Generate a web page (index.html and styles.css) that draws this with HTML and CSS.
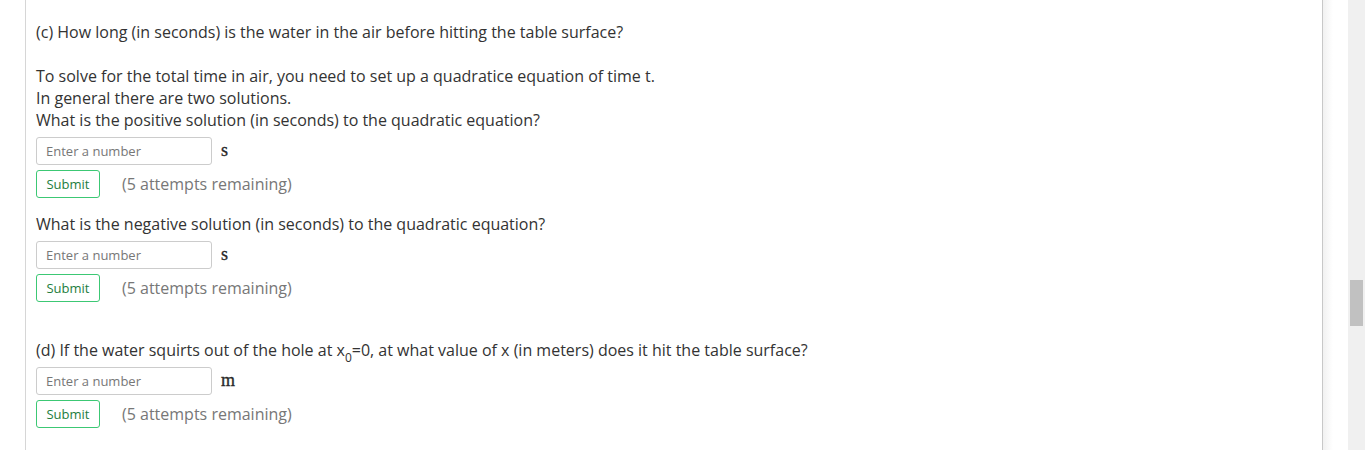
FILE: index.html
```html
<!DOCTYPE html>
<html>
<head>
<meta charset="utf-8">
<link rel="stylesheet" href="styles.css">
</head>
<body>
<div class="page">
  <div class="gutter"></div>
  <main class="panel">
    <p class="q">(c) How long (in seconds) is the water in the air before hitting the table surface?</p>
    <p class="q q-intro">To solve for the total time in air, you need to set up a quadratice equation of time t.<br>In general there are two solutions.<br>What is the positive solution (in seconds) to the quadratic equation?</p>
    <div class="answer">
      <div class="field"><input class="num" type="text" placeholder="Enter a number"><span class="unit">s</span></div>
      <div class="actions"><button class="submit">Submit</button><span class="attempts">(5 attempts remaining)</span></div>
    </div>
    <p class="q q-next">What is the negative solution (in seconds) to the quadratic equation?</p>
    <div class="answer">
      <div class="field"><input class="num" type="text" placeholder="Enter a number"><span class="unit">s</span></div>
      <div class="actions"><button class="submit">Submit</button><span class="attempts">(5 attempts remaining)</span></div>
    </div>
    <p class="q q-part">(d) If the water squirts out of the hole at x<sub>0</sub>=0, at what value of x (in meters) does it hit the table surface?</p>
    <div class="answer">
      <div class="field"><input class="num" type="text" placeholder="Enter a number"><span class="unit">m</span></div>
      <div class="actions"><button class="submit">Submit</button><span class="attempts">(5 attempts remaining)</span></div>
    </div>
  </main>
  <div class="side"></div>
  <div class="scrollbar"><div class="thumb"></div></div>
</div>
</body>
</html>
```
FILE: styles.css
```css
html, body {
  margin: 0;
  padding: 0;
  height: 100%;
  overflow: hidden;
  background: #fff;
}
.page {
  display: flex;
  height: 450px;
  font-family: "Open Sans", "Liberation Sans", sans-serif;
  font-size: 16px;
  line-height: 22px;
  color: #333;
}
.gutter {
  width: 25px;
  flex: none;
}
.panel {
  width: 1286px;
  flex: none;
  border-left: 1px solid #d6d6d6;
  border-right: 1px solid #c8c8c8;
  padding: 21px 0 0 10px;
  box-sizing: content-box;
}
.q {
  margin: 0;
}
.q-intro {
  margin-top: 22px;
}
.q-next {
  margin-top: 15px;
}
.q-part {
  margin-top: 37px;
}
.q sub {
  font-size: 12px;
  line-height: 0;
  vertical-align: -6px;
}
.answer {
  padding-top: 6px;
}
.field {
  display: flex;
  align-items: center;
  height: 28px;
}
.num {
  width: 176px;
  height: 28px;
  box-sizing: border-box;
  border: 1px solid #ccc;
  border-radius: 3px;
  padding: 0 9px;
  font-family: "Open Sans", "Liberation Sans", sans-serif;
  font-size: 13px;
  color: #333;
  outline: none;
}
.num::placeholder {
  color: #777;
}
.unit {
  margin-left: 9px;
  font-family: "Liberation Serif", "DejaVu Serif", serif;
  font-size: 18px;
  color: #2a2a2a;
  -webkit-text-stroke: 0.35px #2a2a2a;
  position: relative;
  top: -1px;
}
.actions {
  display: flex;
  align-items: center;
  height: 28px;
  margin-top: 5px;
}
.submit {
  width: 64px;
  height: 28px;
  box-sizing: border-box;
  border: 1px solid #3cc874;
  border-radius: 3px;
  background: #fff;
  color: #1e7d3e;
  font-family: "Open Sans", "Liberation Sans", sans-serif;
  font-size: 13px;
  padding: 0;
}
.attempts {
  margin-left: 22px;
  color: #777;
}
.side {
  width: 25px;
  flex: none;
  background: linear-gradient(to right, #f1f1f1, #fff 10px);
}
.scrollbar {
  width: 17px;
  flex: none;
  background: #f0f0f0;
  padding: 280px 2px 0 2px;
  box-sizing: border-box;
}
.thumb {
  height: 46px;
  background: #c1c1c1;
}
```
